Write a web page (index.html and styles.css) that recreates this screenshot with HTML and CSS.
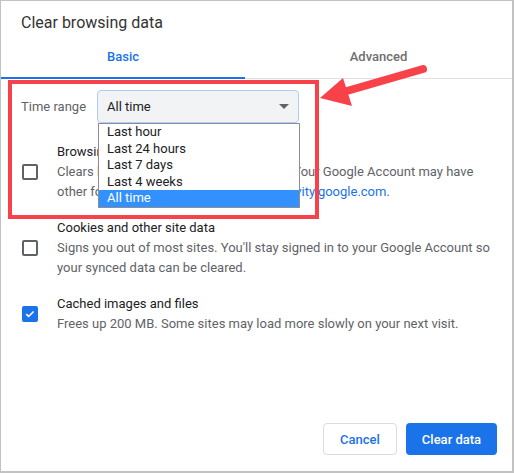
FILE: index.html
```html
<!DOCTYPE html>
<html lang="en">
<head>
    <meta charset="UTF-8">
    <title>Clear browsing data</title>
    <link rel="stylesheet" href="styles.css">
</head>
<body>
    <div class="dialog">
        <h1 class="title">Clear browsing data</h1>

        <div class="tabs">
            <div class="tab active">Basic</div>
            <div class="tab">Advanced</div>
        </div>

        <div class="content">
            <div class="range-row">
                <span class="range-label">Time range</span>
                <div class="select">
                    <span class="select-value">All time</span>
                    <span class="select-caret"></span>
                    <ul class="options">
                        <li>Last hour</li>
                        <li>Last 24 hours</li>
                        <li>Last 7 days</li>
                        <li>Last 4 weeks</li>
                        <li class="selected">All time</li>
                    </ul>
                </div>
            </div>

            <div class="items">
                <div class="item">
                    <span class="checkbox"></span>
                    <div class="item-text">
                        <div class="item-title">Browsing history</div>
                        <div class="item-desc">Clears history from all signed-in devices. Your Google Account may have other forms of browsing history at <a href="#">myactivity.google.com</a>.</div>
                    </div>
                </div>
                <div class="item">
                    <span class="checkbox"></span>
                    <div class="item-text">
                        <div class="item-title">Cookies and other site data</div>
                        <div class="item-desc">Signs you out of most sites. You'll stay signed in to your Google Account so your synced data can be cleared.</div>
                    </div>
                </div>
                <div class="item">
                    <span class="checkbox checked">
                        <svg viewBox="0 0 16 16" width="16" height="16"><path d="M3 8.3l3.2 3 6.6-6.6" fill="none" stroke="#fff" stroke-width="2.2"/></svg>
                    </span>
                    <div class="item-text">
                        <div class="item-title">Cached images and files</div>
                        <div class="item-desc">Frees up 200 MB. Some sites may load more slowly on your next visit.</div>
                    </div>
                </div>
            </div>
        </div>

        <div class="footer">
            <button class="btn btn-cancel">Cancel</button>
            <button class="btn btn-primary">Clear data</button>
        </div>

        <!-- annotation: box round the time range and an arrow pointing at it -->
        <div class="mark-box"></div>
        <svg class="mark-arrow" width="514" height="473" viewBox="0 0 514 473">
            <line x1="423" y1="69" x2="340" y2="93" stroke="#f8424a" stroke-width="8" stroke-linecap="round"/>
            <polygon points="320,98 343,78 352,106" fill="#f8424a"/>
        </svg>
    </div>
</body>
</html>
```

FILE: styles.css
```css
body {
    margin: 0;
    font-family: Roboto, "Liberation Sans", Arial, sans-serif;
    background: #fff;
}
.dialog {
    position: relative;
    box-sizing: border-box;
    width: 514px;
    height: 473px;
    border: 1px solid #c2c2c2;
    border-right-width: 2px;
    border-bottom-width: 2px;
    display: flex;
    flex-direction: column;
}
.title {
    margin: 0;
    padding: 11px 20px 0 20px;
    height: 26px;
    font-size: 16px;
    font-weight: 400;
    line-height: 22px;
    color: #333;
}
.tabs {
    display: flex;
    height: 40px;
    border-bottom: 1px solid #e0e0e0;
}
.tab {
    flex: 1;
    text-align: center;
    font-size: 13px;
    font-weight: 500;
    line-height: 38px;
    color: #6e6e6e;
}
.tab.active {
    color: #1a73e8;
    border-bottom: 2px solid #1a73e8;
    margin-bottom: -1px;
    flex: 0 0 244px;
}
.content {
    padding: 11px 20px 0 20px;
}
.range-row {
    display: flex;
    align-items: center;
    height: 33px;
}
.range-label {
    width: 76px;
    font-size: 13px;
    color: #5f6368;
}
.select {
    position: relative;
    box-sizing: border-box;
    width: 202px;
    height: 33px;
    background: #f1f3f4;
    border: 1px solid #aecbfa;
    border-radius: 4px;
    display: flex;
    align-items: center;
    padding-left: 9px;
    font-size: 13px;
    color: #202124;
}
.select-value {
    flex: 1;
}
.select-caret {
    width: 0;
    height: 0;
    margin-right: 9px;
    border-left: 5px solid transparent;
    border-right: 5px solid transparent;
    border-top: 5px solid #5f6368;
}
.options {
    position: absolute;
    top: 32px;
    left: 0;
    width: 200px;
    margin: 0;
    padding: 0;
    list-style: none;
    background: #fff;
    border: 1px solid #8c8c9a;
    z-index: 2;
}
.options li {
    height: 16.5px;
    line-height: 16px;
    padding-left: 8px;
    font-size: 13px;
    color: #202124;
}
.options li.selected {
    background: #3390ff;
    color: #fff;
}
.items {
    margin-top: 19px;
}
.item {
    display: flex;
    align-items: center;
    margin-bottom: 16px;
}
.checkbox {
    box-sizing: border-box;
    width: 16px;
    height: 16px;
    margin-left: 1px;
    margin-right: 19px;
    border: 2px solid #5f6368;
    border-radius: 2px;
    flex: none;
    display: flex;
    align-items: center;
    justify-content: center;
}
.checkbox.checked {
    background: #1a73e8;
    border-color: #1a73e8;
}
.checkbox svg {
    width: 14px;
    height: 14px;
}
.item-text {
    font-size: 13px;
    line-height: 20px;
    width: 436px;
}
.item-title {
    color: #202124;
}
.item-desc {
    color: #5f6368;
}
.item-desc a {
    color: #1a73e8;
    text-decoration: none;
}
.footer {
    margin-top: auto;
    display: flex;
    justify-content: flex-end;
    gap: 9px;
    padding: 0 15px 16px 0;
}
.btn {
    box-sizing: border-box;
    height: 32px;
    padding: 0 15px;
    border-radius: 4px;
    font-family: inherit;
    font-size: 13px;
    font-weight: 500;
    cursor: pointer;
}
.btn-cancel {
    background: #fff;
    color: #1a73e8;
    border: 1px solid #dadce0;
    width: 74px;
}
.btn-primary {
    background: #1a73e8;
    color: #fff;
    border: none;
    width: 91px;
}
.mark-box {
    position: absolute;
    left: 7px;
    top: 79px;
    box-sizing: border-box;
    width: 311px;
    height: 139px;
    border: 4.5px solid #f8424a;
    pointer-events: none;
    z-index: 3;
}
.mark-arrow {
    position: absolute;
    left: -1px;
    top: -1px;
    pointer-events: none;
    z-index: 3;
}
```
